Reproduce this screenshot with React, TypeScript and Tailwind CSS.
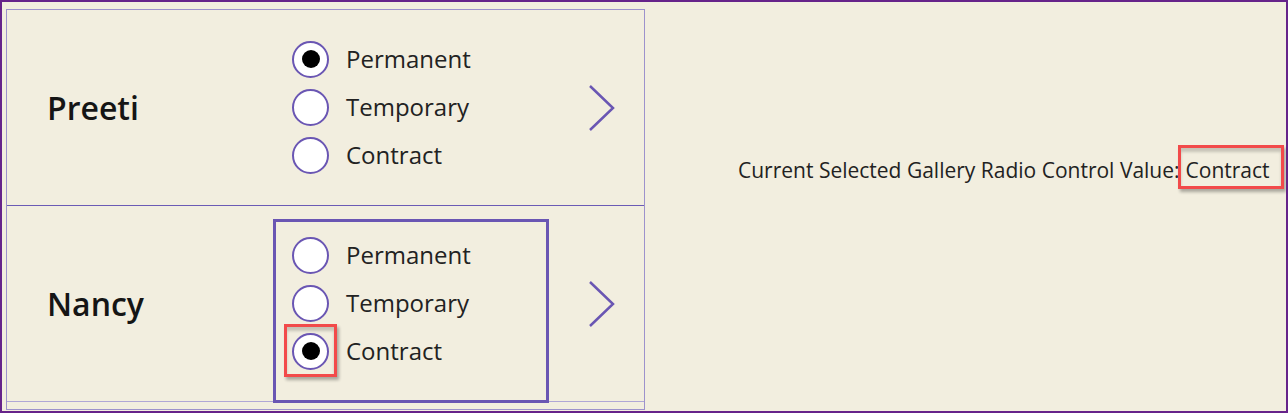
import React from "react";

const font = { fontFamily: '"Open Sans", "Noto Sans", sans-serif' };

function Radio({ checked, label }: { checked: boolean; label: string }) {
  return (
    <div className="flex items-center h-[48px]">
      <div className="w-[37px] h-[37px] rounded-full border-2 border-[#6a56b3] bg-white flex items-center justify-center shrink-0">
        {checked && <div className="w-[18px] h-[18px] rounded-full bg-black" />}
      </div>
      <span className="ml-[17px] text-[24px] text-[#222222] leading-none">{label}</span>
    </div>
  );
}

function Chevron() {
  return (
    <svg width="28" height="48" viewBox="0 0 28 48" className="shrink-0">
      <polyline points="2,2 25,24 2,46" fill="none" stroke="#6a56b3" strokeWidth="2.5" />
    </svg>
  );
}

function Row({ name, selected, focused }: { name: string; selected: number; focused?: boolean }) {
  const opts = ["Permanent", "Temporary", "Contract"];
  return (
    <div className="relative flex items-center h-full">
      <div className="w-[285px] shrink-0 pl-[40px] text-[32px] font-semibold text-[#151515]">{name}</div>
      <div className="flex flex-col self-start pt-[25px] w-[296px] shrink-0">
        {opts.map((o, i) => (
          <div key={o} className="relative">
            <Radio checked={i === selected} label={o} />
            {focused && i === selected && (
              <div className="absolute left-[-8px] top-[-3px] w-[53px] h-[53px] border-[3px] border-[#f24a4a] shadow-[inset_0_4px_3px_rgba(0,0,0,0.18),2px_3px_3px_rgba(0,0,0,0.3)]" />
            )}
          </div>
        ))}
      </div>
      <Chevron />
      {focused && (
        <div className="absolute left-[266px] top-[13px] w-[276px] h-[184px] border-[3px] border-[#6a56b3]" />
      )}
    </div>
  );
}

export default function App() {
  return (
    <div
      className="w-[1288px] h-[413px] border-2 border-[#66238a] bg-[#f2eedf] flex box-border overflow-hidden"
      style={font}
    >
      <div className="ml-[4px] mt-[7px] w-[639px] h-[401px] border border-[#9d92cc] flex flex-col shrink-0">
        <div className="h-[196px] border-b border-[#6b5bb5] shrink-0">
          <Row name="Preeti" selected={0} />
        </div>
        <div className="h-[196px] border-b border-[#b0a7d6] shrink-0">
          <Row name="Nancy" selected={2} focused />
        </div>
      </div>
      <div className="flex-1 pt-[148px] pl-[93px]">
        <div className="flex items-center h-[42px] text-[21px] text-[#222222] whitespace-nowrap">
          <span>Current Selected Gallery Radio Control Value:</span>
          <span className="relative ml-[6px]">
            Contract
            <span className="absolute left-[-8px] top-[-10px] w-[106px] h-[44px] border-[3px] border-[#f24a4a] shadow-[inset_0_4px_3px_rgba(0,0,0,0.18),2px_3px_3px_rgba(0,0,0,0.3)]" />
          </span>
        </div>
      </div>
    </div>
  );
}
